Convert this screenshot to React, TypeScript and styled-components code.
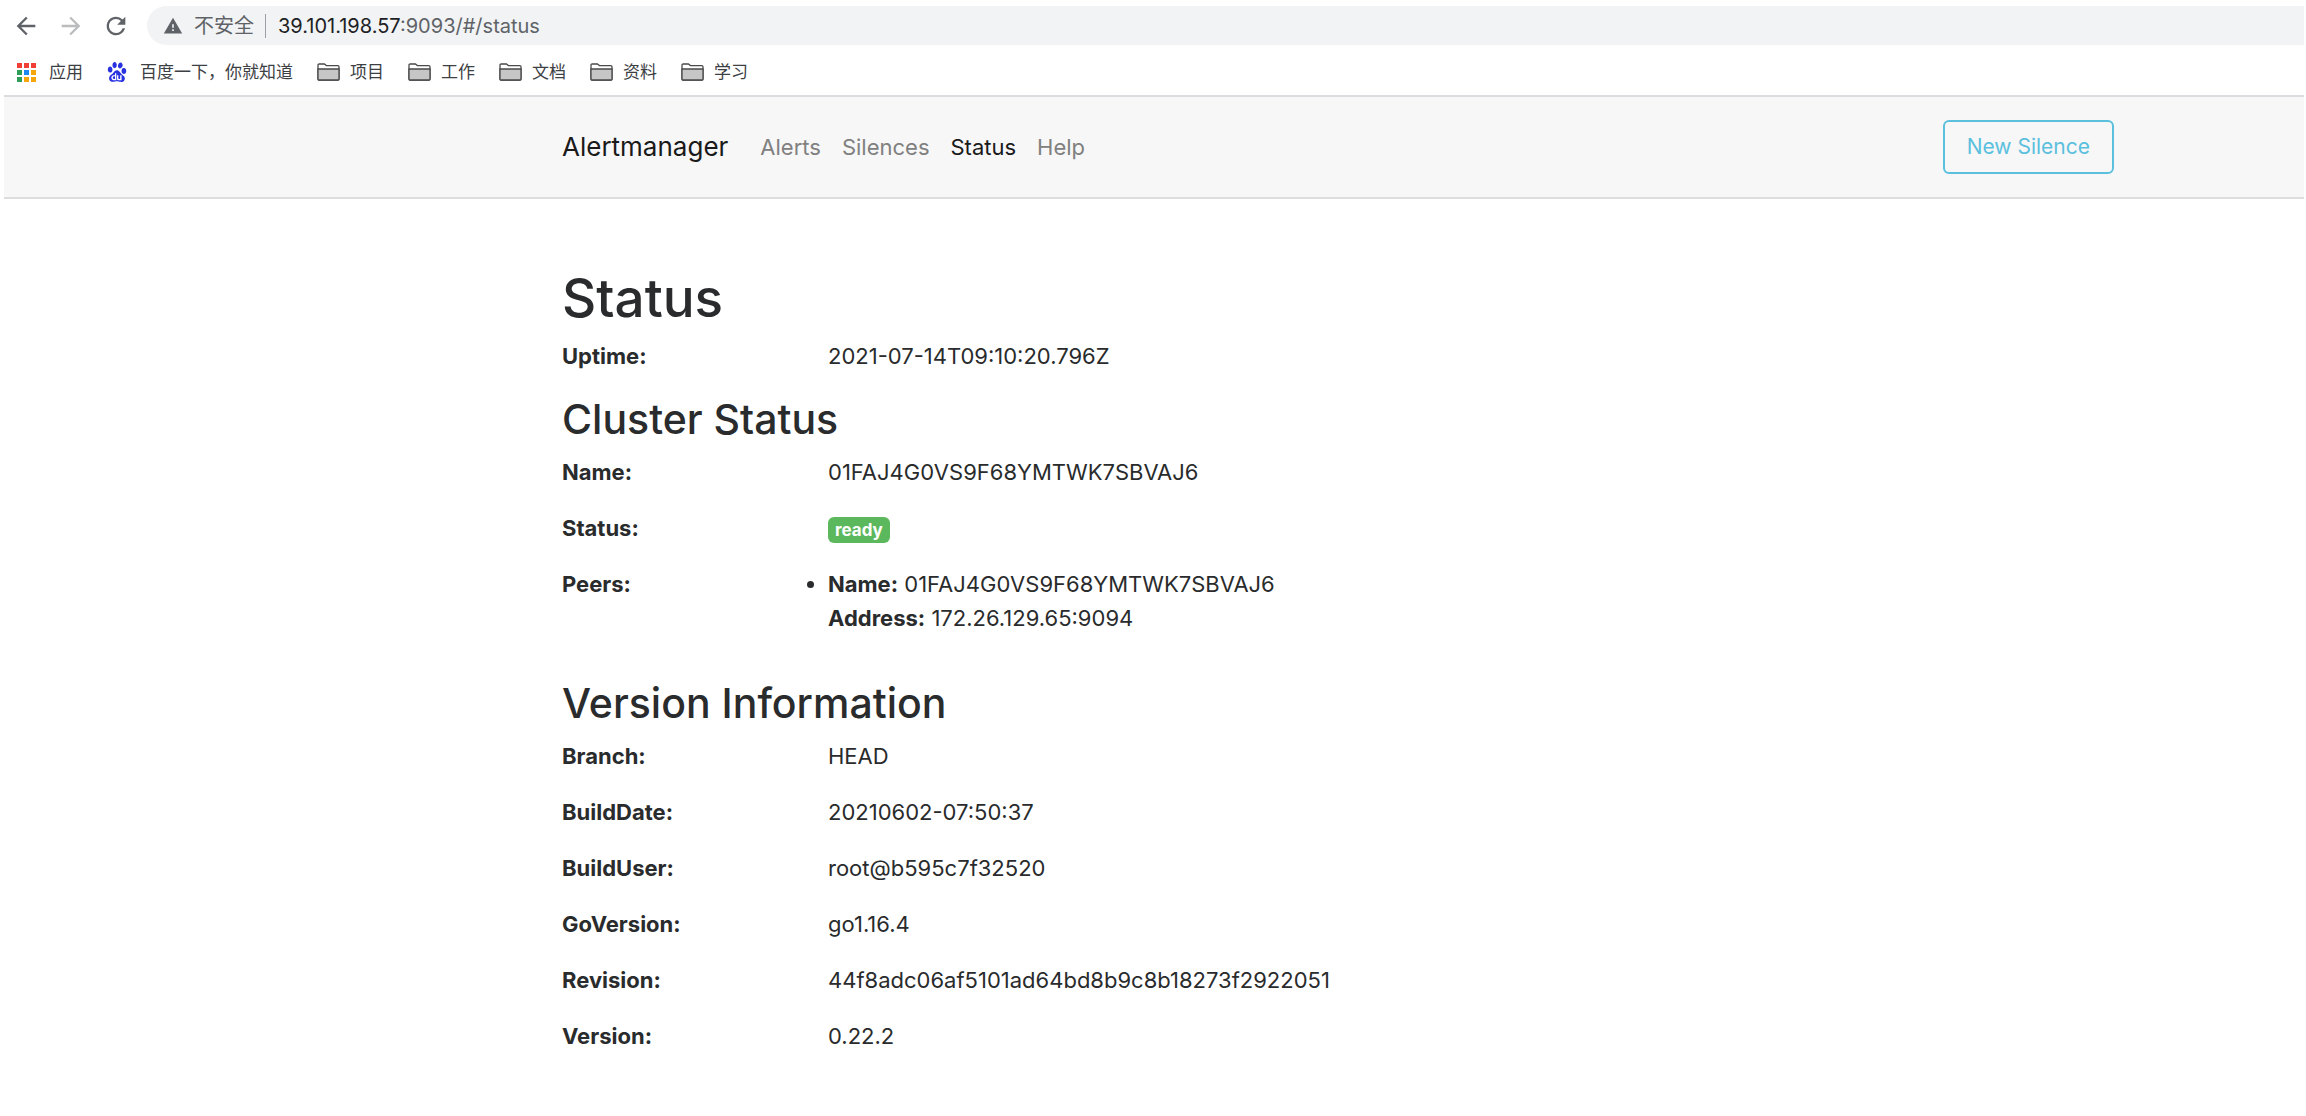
import React from 'react';
import styled, { createGlobalStyle } from 'styled-components';
import { MdArrowBack, MdArrowForward, MdRefresh, MdWarning } from 'react-icons/md';
import { SiBaidu } from 'react-icons/si';

const GlobalStyle = createGlobalStyle`
  *, *::before, *::after { box-sizing: border-box; }
  body {
    margin: 0;
    background: #fff;
    color: #292b2c;
    font-family: Inter, "Noto Sans CJK SC", sans-serif;
    font-size: 22px;
    line-height: 34px;
  }
`;

const Frame = styled.div`
  padding: 0 2px 0 4px;
  overflow-x: hidden;
`;

const Toolbar = styled.div`
  display: flex;
  align-items: center;
  gap: 17px;
  padding: 6px 0 0 8px;
`;

const ToolButton = styled.button`
  display: flex;
  padding: 0;
  border: 0;
  background: none;
  color: #5f6368;
  &:disabled { color: #babcbe; }
`;

const AddressBar = styled.div`
  display: flex;
  flex: 1;
  align-items: center;
  height: 39px;
  padding-left: 16px;
  border-radius: 20px 0 0 20px;
  background: #f1f3f4;
  color: #5f6368;
  font-size: 20px;
  line-height: 24px;
`;

const Insecure = styled.span`
  display: flex;
  align-items: center;
  gap: 11px;
  padding-right: 11px;
  border-right: 1px solid #9aa0a6;
`;

const Url = styled.span`
  padding-left: 12px;
`;

const Host = styled.span`
  color: #202124;
`;

const Bookmarks = styled.nav`
  display: flex;
  align-items: center;
  gap: 24px;
  height: 50px;
  padding: 4px 0 0 13px;
`;

const Bookmark = styled.a<{ $gap: number }>`
  display: flex;
  align-items: center;
  gap: ${(p) => p.$gap}px;
  color: #3c4043;
  font-size: 17px;
  line-height: 24px;
  text-decoration: none;
  white-space: nowrap;
`;

const NavBar = styled.header`
  border-top: 2px solid #dadce0;
  border-bottom: 2px solid #dcdddd;
  background: #f7f7f7;
`;

const Container = styled.div`
  max-width: 2110px;
  padding-left: 558px;
`;

const NavRow = styled(Container)`
  display: flex;
  align-items: center;
  height: 100px;
`;

const Brand = styled.a`
  margin-right: 32px;
  color: #1a1a1a;
  font-size: 26px;
  text-decoration: none;
`;

const NavLinks = styled.nav`
  display: flex;
  flex: 1;
  gap: 21px;
`;

const NavLink = styled.a`
  color: #808080;
  text-decoration: none;
  &[aria-current] { color: #1a1a1a; }
`;

const NewSilence = styled.button`
  padding: 8px 22px;
  border: 2px solid #5bc0de;
  border-radius: 6px;
  background: transparent;
  color: #5bc0de;
  font: inherit;
  font-size: 21px;
`;

const Main = styled(Container).attrs({ as: 'main' })`
  padding-top: 68px;
  padding-bottom: 62px;
`;

const Title = styled.h1`
  margin: 0 0 10px;
  font-size: 53px;
  font-weight: 500;
  line-height: 62px;
`;

const Heading = styled.h2`
  margin: 0 0 11px;
  font-size: 41px;
  font-weight: 500;
  line-height: 49px;
`;

const Details = styled.dl<{ $last?: number }>`
  display: grid;
  grid-template-columns: 266px 1fr;
  row-gap: 22px;
  margin: 0 0 ${(p) => p.$last ?? 22}px;
`;

const Term = styled.dt`
  font-weight: 700;
`;

const Value = styled.dd`
  margin: 0;
`;

const Badge = styled.span`
  display: inline-block;
  padding: 0 7px;
  border-radius: 6px;
  background: #5cb85c;
  color: #fff;
  font-size: 17px;
  font-weight: 700;
  line-height: 26px;
`;

const PeerList = styled.ul`
  margin: 0;
  padding: 0;
`;

const Folder = () => (
  <svg width="23" height="18" viewBox="0 0 23 18" aria-hidden="true">
    <path d="M1 16V2.2Q1 1 2.2 1H7.4L9.4 2.6H20.8Q22 2.6 22 3.8V16Q22 17 21 17H2Q1 17 1 16Z" fill="#fff" stroke="#4a4a4a" strokeWidth="1.3" />
    <path d="M1 6H22V16Q22 17 21 17H2Q1 17 1 16Z" fill="#c6c6c6" stroke="#4a4a4a" strokeWidth="1.3" />
  </svg>
);

const appColors = ['#f13f35', '#f13f35', '#f13f35', '#2f9e58', '#1e88f5', '#f4a60b', '#2f9e58', '#f4a60b', '#f4a60b'];

const AppsIcon = () => (
  <svg width="19" height="19" viewBox="0 0 19 19" aria-hidden="true">
    {appColors.map((c, i) => (
      <rect key={i} x={(i % 3) * 7} y={Math.floor(i / 3) * 7} width="5" height="5" fill={c} />
    ))}
  </svg>
);

const folders = ['项目', '工作', '文档', '资料', '学习'];

const version = [
  ['Branch', 'HEAD'],
  ['BuildDate', '20210602-07:50:37'],
  ['BuildUser', 'root@b595c7f32520'],
  ['GoVersion', 'go1.16.4'],
  ['Revision', '44f8adc06af5101ad64bd8b9c8b18273f2922051'],
  ['Version', '0.22.2'],
];

export default function App() {
  return (
    <>
      <GlobalStyle />
      <Frame>
        <Toolbar>
          <ToolButton aria-label="Back"><MdArrowBack size={28} /></ToolButton>
          <ToolButton aria-label="Forward" disabled><MdArrowForward size={28} /></ToolButton>
          <ToolButton aria-label="Reload"><MdRefresh size={28} /></ToolButton>
          <AddressBar>
            <Insecure><MdWarning size={20} />不安全</Insecure>
            <Url><Host>39.101.198.57</Host>:9093/#/status</Url>
          </AddressBar>
        </Toolbar>
        <Bookmarks aria-label="Bookmarks">
          <Bookmark href="#/apps" $gap={13}><AppsIcon />应用</Bookmark>
          <Bookmark href="#/baidu" $gap={13}><SiBaidu size={20} color="#2932e1" />百度一下，你就知道</Bookmark>
          {folders.map((name) => (
            <Bookmark key={name} href="#/folder" $gap={10}><Folder />{name}</Bookmark>
          ))}
        </Bookmarks>
        <NavBar>
          <NavRow>
            <Brand href="#/">Alertmanager</Brand>
            <NavLinks aria-label="Main">
              <NavLink href="#/alerts">Alerts</NavLink>
              <NavLink href="#/silences">Silences</NavLink>
              <NavLink href="#/status" aria-current="page">Status</NavLink>
              <NavLink href="#/help">Help</NavLink>
            </NavLinks>
            <NewSilence>New Silence</NewSilence>
          </NavRow>
        </NavBar>
        <Main>
          <Title>Status</Title>
          <Details>
            <Term>Uptime:</Term>
            <Value>2021-07-14T09:10:20.796Z</Value>
          </Details>
          <Heading>Cluster Status</Heading>
          <Details $last={44}>
            <Term>Name:</Term>
            <Value>01FAJ4G0VS9F68YMTWK7SBVAJ6</Value>
            <Term>Status:</Term>
            <Value><Badge>ready</Badge></Value>
            <Term>Peers:</Term>
            <Value>
              <PeerList>
                <li>
                  <b>Name:</b> 01FAJ4G0VS9F68YMTWK7SBVAJ6<br />
                  <b>Address:</b> 172.26.129.65:9094
                </li>
              </PeerList>
            </Value>
          </Details>
          <Heading>Version Information</Heading>
          <Details>
            {version.map(([label, value]) => (
              <React.Fragment key={label}>
                <Term>{label}:</Term>
                <Value>{value}</Value>
              </React.Fragment>
            ))}
          </Details>
        </Main>
      </Frame>
    </>
  );
}
